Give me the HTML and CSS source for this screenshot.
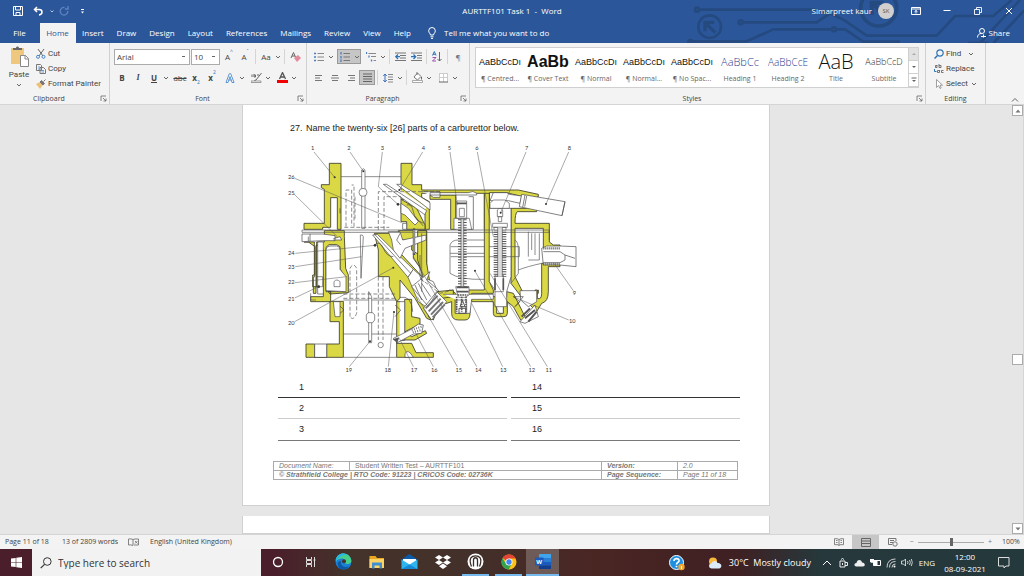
FILE: index.html
```html
<!DOCTYPE html>
<html lang="en">
<head>
  <meta charset="UTF-8">
  <meta name="viewport" content="width=device-width, initial-scale=1.0">
  <title>AURTTF101 Task 1 - Word</title>
  <link rel="stylesheet" href="styles.css">
</head>
<body>
  <!-- shared icons -->
  <svg class="defs" aria-hidden="true">
    <symbol id="chev" viewBox="0 0 8 8"><path d="M2 3l2 2 2-2" fill="none" stroke="#666" /></symbol>
    <symbol id="launcher" viewBox="0 0 7 7"><path d="M1 6V1h5M3 3l3 3M6 3.500V6H3.500" fill="none" stroke="#666" stroke-width=".8"/></symbol>
  </svg>

  <!-- Title bar and tabs -->
  <header class="header">
    <svg class="circuit" viewBox="0 0 1272 129" aria-hidden="true">
      <g fill="none" stroke="#254a80" stroke-width="8">
        <circle cx="291" cy="29" r="6"/><path d="M300 29H640L690 40 735 62 800 107H1010L1065 48H1180L1235 0"/>
        <circle cx="422" cy="67" r="6"/><path d="M431 67H650L690 40"/>
        <circle cx="702" cy="88" r="6"/><path d="M271 124H440L520 88H693M711 88H735L790 125H900"/>
        <circle cx="271" cy="126" r="6"/>
        <circle cx="329" cy="80" r="34"/><path d="M346 98L317 69M315 94V67H343" stroke-width="10"/>
        <circle cx="836" cy="24" r="54" stroke-width="11"/><path d="M862 55L818 10M815 45V8H850" stroke-width="12"/>
        <path d="M1140 129L1260 0M1180 129L1272 32"/><path d="M1105 129h60"/>
      </g>
    </svg>
    <div class="title-row">
      <div class="quick">
        <button aria-label="Save"><svg width="10" height="10" viewBox="0 0 10 10"><path d="M.5.500h9v9h-9zM2.500.500v3.500h5V.500M3 9.500V6.500h4v3" fill="none" stroke="#fff"/></svg></button>
        <button aria-label="Undo"><svg width="10" height="10" viewBox="0 0 10 10"><path d="M4 1L1.500 3.500 4 6M1.500 3.500H6c4 0 4 5 0 5.500" fill="none" stroke="#fff" stroke-width="1.500"/></svg></button>
        <button class="narrow" aria-label="Undo list"><svg width="8" height="8" viewBox="0 0 8 8"><path d="M2.500 3.500L4 5l1.500-1.500" fill="none" stroke="#b9c9e4"/></svg></button>
        <button class="redo" aria-label="Redo"><svg width="10" height="10" viewBox="0 0 10 10"><path d="M5.500 1.500A3.800 3.800 0 1 0 8.800 5M9 0v3H6" fill="none" stroke="#5f83bf" stroke-width="1.300"/></svg></button>
        <button aria-label="Customise toolbar"><svg width="8" height="8" viewBox="0 0 8 8"><path d="M3 2.500h3" stroke="#fff"/><path d="M3 4.500h3l-1.500 2z" fill="#fff"/></svg></button>
      </div>
      <h1>AURTTF101 Task 1 &nbsp;-&nbsp; Word</h1>
      <div class="account">
        <span>Simarpreet kaur</span>
        <button class="avatar">SK</button>
        <div class="window-btns">
          <button aria-label="Ribbon options"><svg width="10" height="8" viewBox="0 0 10 8"><path d="M.5.500h9v7h-9zM.5 2h9M5 6.500V3.500M3.500 4.800L5 3.500l1.500 1.300" fill="none" stroke="#fff"/></svg></button>
          <button aria-label="Minimise"><svg width="8" height="8" viewBox="0 0 8 8"><path d="M.5 3.500h7" stroke="#fff"/></svg></button>
          <button aria-label="Restore"><svg width="8" height="8" viewBox="0 0 8 8"><path d="M.5 2.500h5v5h-5zM2.500 2.500v-2h5v5h-2" fill="none" stroke="#fff" stroke-width=".9"/></svg></button>
          <button aria-label="Close"><svg width="8" height="8" viewBox="0 0 8 8"><path d="M1 1l6 6M7 1L1 7" stroke="#fff"/></svg></button>
        </div>
      </div>
    </div>
    <nav class="tabs">
      <button class="tab file">File</button>
      <button class="tab active">Home</button>
      <button class="tab">Insert</button>
      <button class="tab">Draw</button>
      <button class="tab">Design</button>
      <button class="tab">Layout</button>
      <button class="tab">References</button>
      <button class="tab">Mailings</button>
      <button class="tab">Review</button>
      <button class="tab">View</button>
      <button class="tab">Help</button>
      <label class="tell-me">
        <svg width="8" height="12" viewBox="0 0 8 12"><path d="M2.500 8C2.500 6.500.700 6 .700 3.800a3.300 3.300 0 0 1 6.600 0C7.300 6 5.500 6.500 5.500 8zM2.500 9.800h3M3 11.400h2" fill="none" stroke="#fff"/></svg>
        <input type="text" placeholder="Tell me what you want to do" aria-label="Tell me what you want to do">
      </label>
      <button class="share"><svg width="9" height="10" viewBox="0 0 9 10"><circle cx="5" cy="3" r="2.500" fill="none" stroke="#fff"/><path d="M.5 9.500C.5 7 2 5.500 4.500 5.500M4 8.500h5M6.500 6.500v3" fill="none" stroke="#fff"/></svg>Share</button>
    </nav>
  </header>

  <!-- Ribbon -->
  <section class="ribbon">
    <div class="group clipboard">
      <div class="group-body">
        <button class="paste">
          <svg width="19" height="21" viewBox="0 0 19 21"><path d="M1 2h13v16H1z" fill="#edc87e"/><path d="M3 4V2h3c0-2 3-2 3 0h3v2z" fill="#666"/><path d="M10.500 9.500h5l3 3v8h-8z" fill="#fff" stroke="#888"/><path d="M15 9.500v3.500h3.500" fill="none" stroke="#888"/></svg>
          <span>Paste</span>
          <svg width="8" height="8"><use href="#chev"/></svg>
        </button>
        <div class="stack">
          <button><svg width="10" height="10" viewBox="0 0 10 10"><path d="M2 0l5 7M8 0L3 7" stroke="#666" fill="none"/><circle cx="2" cy="7.800" r="1.500" fill="none" stroke="#4a86c5"/><circle cx="7.500" cy="7.800" r="1.500" fill="none" stroke="#4a86c5"/></svg>Cut</button>
          <button><svg width="10" height="10" viewBox="0 0 10 10"><path d="M.5.500h4l1 1v5h-5zM4 3.500h3.500l2 2v4H4z" fill="#f3f3f3" stroke="#777"/><path d="M2 3h2M2 5h2M5.500 6.500H8M5.500 8H8" stroke="#4a86c5" stroke-width=".8"/></svg>Copy</button>
          <button><svg width="10" height="10" viewBox="0 0 10 10"><path d="M0 5l4-2 3 3-3 4z" fill="#edc07a"/><path d="M4 3l1.500-1.500 3 3L7 6zM7.500 2.500L9.500.500" fill="#777" stroke="#777"/></svg>Format Painter</button>
        </div>
      </div>
      <div class="group-label"><span>Clipboard</span><button aria-label="Clipboard options"><svg width="7" height="7"><use href="#launcher"/></svg></button></div>
    </div>

    <div class="group font">
      <div class="group-body rows">
        <div class="tools">
          <select class="font-name" aria-label="Font"><option>Arial</option></select>
          <select class="font-size" aria-label="Font size"><option>10</option></select>
          <button aria-label="Grow font">A<sup class="blue">^</sup></button>
          <button aria-label="Shrink font">A<sup class="blue">ˇ</sup></button>
          <i class="sep"></i>
          <button aria-label="Change case">Aa</button>
          <button class="chev" aria-label="Change case list"><svg width="8" height="8"><use href="#chev"/></svg></button>
          <i class="sep"></i>
          <button aria-label="Clear formatting"><svg width="11" height="10" viewBox="0 0 11 10"><path d="M1 6l2.500-5.500L5.500 5M2 4h3" fill="none" stroke="#666"/><path d="M4 6l4-3 3 3-4 4z" fill="#e58a9b"/></svg></button>
        </div>
        <div class="tools">
          <button aria-label="Bold"><b>B</b></button>
          <button aria-label="Italic"><b class="ital">I</b></button>
          <button aria-label="Underline"><b class="under">U</b></button>
          <button class="chev" aria-label="Underline list"><svg width="8" height="8"><use href="#chev"/></svg></button>
          <button class="gap" aria-label="Strikethrough"><s>abc</s></button>
          <button aria-label="Subscript"><b>x</b><sub class="blue">2</sub></button>
          <button aria-label="Superscript"><b>x</b><sup class="blue">2</sup></button>
          <button class="gap" aria-label="Text effects"><svg width="10" height="10" viewBox="0 0 10 10"><path d="M1 9.500L4.300.700h1.400L9 9.500H7L5 3.500 3 9.500zM3.500 7h3" fill="#fff" stroke="#5b93d0"/></svg></button>
          <button class="chev" aria-label="Text effects list"><svg width="8" height="8"><use href="#chev"/></svg></button>
          <button class="gap" aria-label="Highlight"><svg width="11" height="10" viewBox="0 0 11 10"><path d="M0 8h10v1.500H0z" fill="#fff" stroke="#777" stroke-width=".7"/><path d="M10.500 0L5 7 3.500 7.500M1 1.500v2.500M3 1v3h1.500V2H3M6 2h2" fill="none" stroke="#666"/></svg></button>
          <button class="chev" aria-label="Highlight list"><svg width="8" height="8"><use href="#chev"/></svg></button>
          <button class="gap" aria-label="Font colour"><svg width="11" height="11" viewBox="0 0 11 11"><path d="M2.500 7l3-6.500L8.500 7M3.500 5h4" fill="none" stroke="#555" stroke-width="1.300"/><path d="M0 8h11v3H0z" fill="#f00000"/></svg></button>
          <button class="chev" aria-label="Font colour list"><svg width="8" height="8"><use href="#chev"/></svg></button>
        </div>
      </div>
      <div class="group-label"><span>Font</span><button aria-label="Font options"><svg width="7" height="7"><use href="#launcher"/></svg></button></div>
    </div>

    <div class="group paragraph">
      <div class="group-body rows">
        <div class="tools">
          <button aria-label="Bullets"><svg width="10" height="10" viewBox="0 0 10 10"><path d="M0 1.500h2M0 5h2M0 8.500h2" stroke="#4a7fc0" stroke-width="1.500"/><path d="M3.500 1.500H10M3.500 5H10M3.500 8.500H10" stroke="#888"/></svg></button>
          <button class="chev" aria-label="Bullets list"><svg width="8" height="8"><use href="#chev"/></svg></button>
          <span class="pressed gap">
            <button aria-label="Numbering"><svg width="10" height="10" viewBox="0 0 10 10"><path d="M1 0v2.500M1 4v2.500M1 7.500V10" stroke="#4a7fc0" stroke-width="1.300"/><path d="M3.500 1.500H10M3.500 5H10M3.500 8.500H10" stroke="#777"/></svg></button>
            <button class="chev" aria-label="Numbering list"><svg width="8" height="8"><use href="#chev"/></svg></button>
          </span>
          <button class="gap" aria-label="Multilevel list"><svg width="10" height="10" viewBox="0 0 10 10"><path d="M.5 0v2M3 3.500v2M5.500 7.500v2" stroke="#4a7fc0" stroke-width="1.300"/><path d="M2.500 1.500H10M5 4.500h5M7.500 8.500H10" stroke="#888"/></svg></button>
          <button class="chev" aria-label="Multilevel options"><svg width="8" height="8"><use href="#chev"/></svg></button>
          <i class="sep"></i>
          <button aria-label="Decrease indent"><svg width="11" height="10" viewBox="0 0 11 10"><path d="M0 1h11M5 3.500h6M5 6h6M0 8.500h11" stroke="#777"/><path d="M5 4.700H1M3 2.500L.800 4.700 3 7" fill="none" stroke="#2f75b5" stroke-width="1.300"/></svg></button>
          <button aria-label="Increase indent"><svg width="11" height="10" viewBox="0 0 11 10"><path d="M0 1h11M6 3.500h5M6 6h5M0 8.500h11" stroke="#777"/><path d="M0 4.700h4M2.500 2.500l2.200 2.200L2.500 7" fill="none" stroke="#2f75b5" stroke-width="1.300"/></svg></button>
          <i class="sep"></i>
          <button aria-label="Sort"><svg width="10" height="11" viewBox="0 0 10 11"><path d="M.5 4.500L2.300.500l1.800 4M1 3.300h2.500" fill="none" stroke="#2f75b5"/><path d="M.5 6.500H4L.500 10H4" fill="none" stroke="#9b4fae"/><path d="M7.500 1v9M5.500 8l2 2 2-2" fill="none" stroke="#666"/></svg></button>
          <i class="sep"></i>
          <button class="mark" aria-label="Show marks">¶</button>
        </div>
        <div class="tools">
          <button aria-label="Align left"><svg width="8" height="8" viewBox="0 0 8 8"><path d="M0 1.500h7M0 4h5M0 6.500h7" stroke="#777"/></svg></button>
          <button aria-label="Centre"><svg width="8" height="8" viewBox="0 0 8 8"><path d="M1 1.500h6M0 4h8M1 6.500h6" stroke="#777"/></svg></button>
          <button aria-label="Align right"><svg width="8" height="8" viewBox="0 0 8 8"><path d="M1 1.500h7M3 4h5M1 6.500h7" stroke="#777"/></svg></button>
          <button class="pressed" aria-label="Justify"><svg width="9" height="9" viewBox="0 0 9 9"><path d="M0 1h9M0 3.500h9M0 6h9M0 8.500h9" stroke="#666"/></svg></button>
          <i class="sep"></i>
          <button aria-label="Line spacing"><svg width="10" height="10" viewBox="0 0 10 10"><path d="M2 1v8M.3 3L2 1l1.700 2M.3 7L2 9l1.700-2" fill="none" stroke="#3d6fc0"/><path d="M5 1.500h5M5 4h5M5 6.500h5M5 9h5" stroke="#888"/></svg></button>
          <button class="chev" aria-label="Line spacing list"><svg width="8" height="8"><use href="#chev"/></svg></button>
          <i class="sep"></i>
          <button aria-label="Shading"><svg width="11" height="11" viewBox="0 0 11 11"><path d="M2 5l3.500-4L9 4.500 5.500 8zM5 0v3" fill="#fff" stroke="#777"/><path d="M9.500 5v2.500" stroke="#2f75b5"/><path d="M.5 8.500h10v2H.500z" fill="#fff" stroke="#888" stroke-width=".7"/></svg></button>
          <button class="chev" aria-label="Shading list"><svg width="8" height="8"><use href="#chev"/></svg></button>
          <button class="gap" aria-label="Borders"><svg width="9" height="10" viewBox="0 0 9 10"><path d="M0 0h9v9H0z" fill="#fff"/><path d="M.5 0v9M8.500 0v9M4.500 0v9M0 .5h9M0 4.500h9" stroke="#ccc"/><path d="M0 9h9" stroke="#666"/></svg></button>
          <button class="chev" aria-label="Borders list"><svg width="8" height="8"><use href="#chev"/></svg></button>
        </div>
      </div>
      <div class="group-label"><span>Paragraph</span><button aria-label="Paragraph options"><svg width="7" height="7"><use href="#launcher"/></svg></button></div>
    </div>

    <div class="group styles">
      <div class="group-body">
        <div class="gallery">
          <button class="style"><span class="sample">AaBbCcDı</span><span>¶ Centred...</span></button>
          <button class="style"><span class="sample cover">AaBb</span><span>¶ Cover Text</span></button>
          <button class="style"><span class="sample">AaBbCcDı</span><span>¶ Normal</span></button>
          <button class="style"><span class="sample">AaBbCcDı</span><span>¶ Normal...</span></button>
          <button class="style"><span class="sample">AaBbCcDı</span><span>¶ No Spac...</span></button>
          <button class="style"><span class="sample h-one">AaBbCc</span><span>Heading 1</span></button>
          <button class="style"><span class="sample h-two">AaBbCcE</span><span>Heading 2</span></button>
          <button class="style"><span class="sample big">AaB</span><span>Title</span></button>
          <button class="style"><span class="sample subtitle">AaBbCcD</span><span>Subtitle</span></button>
          <div class="gallery-scroll">
            <button class="off" aria-label="Up"><svg width="6" height="6" viewBox="0 0 6 6"><path d="M1 4h4L3 2z" fill="#aaa"/></svg></button>
            <button aria-label="Down"><svg width="6" height="6" viewBox="0 0 6 6"><path d="M1 2h4L3 4z" fill="#666"/></svg></button>
            <button aria-label="More"><svg width="6" height="6" viewBox="0 0 6 6"><path d="M.5 1h5" stroke="#666"/><path d="M1 3h4L3 5z" fill="#666"/></svg></button>
          </div>
        </div>
      </div>
      <div class="group-label"><span>Styles</span><button aria-label="Styles options"><svg width="7" height="7"><use href="#launcher"/></svg></button></div>
    </div>

    <div class="group editing">
      <div class="group-body">
        <div class="stack">
          <button><svg width="10" height="10" viewBox="0 0 10 10"><circle cx="6" cy="4" r="3.200" fill="none" stroke="#2f75b5" stroke-width="1.200"/><path d="M3.500 6.500L.500 9.500" stroke="#2f75b5" stroke-width="1.500"/></svg>Find<svg class="more" width="8" height="8"><use href="#chev"/></svg></button>
          <button><svg width="10" height="10" viewBox="0 0 10 10"><path d="M3 1.500H1.500v2H3V1M5 0v3.500h2v-2H5M5.500 6v2.500M5.500 6.500h-2v2h2M9.500 6.500h-2v2h2" fill="none" stroke="#666" stroke-width=".9"/><path d="M.5 5v2.500h2" fill="none" stroke="#2f75b5"/></svg>Replace</button>
          <button><svg width="10" height="10" viewBox="0 0 10 10"><path d="M2.500.500v8l2-2 1.500 3 1.200-.6L6 6.200h2.500z" fill="#fff" stroke="#888" stroke-width=".8"/></svg>Select<svg width="8" height="8"><use href="#chev"/></svg></button>
        </div>
      </div>
      <div class="group-label"><span>Editing</span></div>
    </div>
    <button class="collapse" aria-label="Collapse ribbon"><svg width="8" height="8" viewBox="0 0 8 8"><path d="M1 5.500l3-3 3 3" fill="none" stroke="#666"/></svg></button>
  </section>

  <!-- Document -->
  <main class="workspace">
    <div class="pages">
      <article class="page">
        <p class="question"><span>27.</span>Name the twenty-six [26] parts of a carburettor below.</p>
        <svg class="figure" viewBox="0 0 930 708" role="img" aria-label="Carburettor section">
          <!-- cast body -->
          <g fill="#dad844" stroke="#3a3a2a" stroke-width="2.500">
            <path d="M148 70H183V268H172V173H152V262H128V268H72V250H133V148L124 143V134H148Z"/>
            <path d="M363 70H396V134H425V150H715L775 163V170L770 172 728 170 680 158H628V268H613V160H425V172L448 185V268H435V215L396 188V178H363Z"/>
            <path d="M363 178L410 205 435 255V268H380V245H363Z"/>
            <path d="M450 165H527V268H512V178H450Z"/>
            <path d="M72 306H103V405H98V440H110V306H133V272H193V290L197 385 205 405V458L150 462 145 455H193V410L180 385V320L170 314H147L138 322V455H152V485H92V470H130V330L123 316H108V460H100V415L105 405V320L85 306Z"/>
            <path d="M150 484H190V652H78V612H104V652H140V612H178V545H150Z"/>
            <path d="M283 280H352V330L440 425 480 458H520V480L490 470 452 540 440 535 405 475 360 420V475L350 485 328 440V410H295V330Z"/>
            <path d="M355 272H400V355L440 410V272H418V345L395 330V300H355Z"/>
            <path d="M413 272H440V370L450 430 432 420 413 360Z"/>
            <path d="M350 485H360V600H405L440 580 436 572 395 590 375 575 420 552V535L395 530V478H374V600H350V652H460V638H408L395 610H350Z"/>
            <path d="M613 160H628V425L640 450V460H575V485H640V520Q640 530 650 530H672Q682 530 682 520V485L700 500 722 540 740 545 735 530 700 460 680 455V470L670 475V520H650V470H570V520Q570 540 555 540H535Q515 540 515 520V485L470 500 485 460 510 450 525 458 530 475V520H560V450H613Z"/>
            <path d="M693 205H770V215H712Q705 220 705 250H808V306L820 315H840V325H790V265H705V410L735 470 775 450V460L735 485 693 430Z"/>
            <path d="M785 370H840V380H805V455Q805 485 785 490L770 515 750 495 765 480V450H772V475Q785 480 785 460Z"/>
            <path d="M452 470L470 455 520 450 520 470 485 475 460 540 445 530Z"/>
          </g>
          <!-- passages cut in the body -->
          <g fill="#fff" stroke="#444" stroke-width="2">
            <path d="M335 150L362 150 440 202 430 218Z" stroke="none"/>
            <path d="M310 133H320L440 212 434 224Z"/>
            <path d="M350 133H362L450 188V210Z"/>
            <path d="M66 282H128L165 287V302H128L66 305ZM90 282V304M160 296L180 290 185 300H160"/>
            <path d="M138 330Q138 318 150 318H170Q180 318 180 330V388L198 410V455L138 452Z"/>
            <path d="M113 306H130V462H113ZM104 612H140V652H104ZM160 485H180V530H165Z"/>
            <path d="M278 285L292 283 400 388 384 412Z"/>
            <path d="M384 412L400 388 425 410 460 425 480 470 445 505 415 485Z"/>
            <path d="M285 284L392 400"/>
            <path d="M363 190L385 205 415 245 405 255 375 225 363 220ZM368 250H380V268H368Z"/>
            <path d="M325 275H360L368 300 438 285V300L375 325 360 355 340 330 335 300Z"/>
            <path d="M450 158H565Q580 150 590 160V165H450ZM425 155H480V172H460L450 165"/>
            <path d="M640 158H680L688 163 725 168 720 190 685 182H630Z"/>
            <path d="M725 163L855 185 846 227 718 200ZM735 165L728 202M740 168L734 200M855 185L846 227"/>
            <path d="M628 205H693V410L680 455V500H645V450L628 425Z"/>
            <path d="M566 170H580V268H566M490 463H640V478H575L570 520H525V478"/>
            <path d="M395 440L450 395 440 420 475 450 445 500ZM430 505L470 455 500 485 455 540Z"/>
            <path d="M358 485H374V600H358M375 640Q385 625 400 652H375Z"/>
            <path d="M720 452H770V485L745 500 722 480ZM720 545L765 495 775 530 735 550Z"/>
            <path d="M785 325L800 318H840L888 320V380L840 375H790ZM790 335H840L855 345V360L840 368H790M855 345L885 355"/>
          </g>
          <!-- floats, bowls and covers -->
          <g fill="none" stroke="#555" stroke-width="2">
            <path d="M183 110H363M66 270H808V277H66V270M190 480H350M190 582H350M190 652H350"/>
            <path d="M510 315Q515 300 535 300H613M510 315V340H613M510 340V400Q540 420 613 418M705 300Q715 305 715 330V400L693 430"/>
            <path d="M425 280V455M512 320H613M512 350H613M628 320H718V350H628M715 390Q740 380 785 370M745 275V350M755 280V330M765 280V345M778 280V360H745M808 272V300"/>
            <path d="M92 460V480H108M98 440H128V410H108M162 440V425Q170 415 180 425V440ZM85 290V305"/>
          </g>
          <g fill="#fff" stroke="#555" stroke-width="2">
            <path d="M245 90Q250 82 255 90V265H245ZM241 285H247L250 290 243 415ZM266 455L275 470V608H266Z"/>
            <circle cx="249" cy="157" r="12"/><path d="M264 518H278L284 525V540L278 548H264L259 540V525Z"/>
            <path d="M530 183H560V235H530ZM538 205H553V230H538ZM522 235H568L575 268H522Z"/>
            <path d="M630 190L640 180H675L688 190V205H630ZM652 210Q660 200 668 210V230H652ZM655 230H665V245H655ZM638 250H682V262H638ZM642 262H678V270H642Z"/>
            <path d="M645 405H670V455H645ZM527 440H567V465L555 472H535ZM527 480H560V520H527Z"/>
          </g>
          <!-- springs and threads -->
          <g fill="none" stroke="#555">
            <path d="M547 238V440" stroke-width="26" stroke-dasharray="3 5"/>
            <path d="M660 275V410" stroke-width="38" stroke-dasharray="3 4"/>
            <path d="M547 238V440" stroke-width="7" stroke="#ddd"/>
            <path d="M660 262V410" stroke-width="13" stroke="#ddd"/>
            <path d="M653 262V410M667 262V410M543 238V440M551 238V440" stroke-width="2"/>
            <path d="M437 505L473 467M446 514L482 476M453 524L489 486M458 532L494 494" stroke-width="6" stroke="#777"/>
            <path d="M725 530L750 505M735 535L765 510M745 545L770 515" stroke-width="6"/>
            <path d="M790 325H840M790 372H840" stroke-width="7" stroke-dasharray="3 3"/>
            <path d="M530 470V515M545 470V515M558 470V515M533 465H563" stroke-width="5" stroke-dasharray="5 2"/>
            <path d="M530 442H566M530 455H566M645 415V450M670 415V450M530 190H560" stroke-width="5"/>
            <path d="M540 500L547 480 555 500ZM537 505H557V520H537Z" stroke-width="3"/>
            <path d="M402 265V345" stroke-width="7"/><path d="M402 270V340" stroke="#fff" stroke-width="2"/>
          </g>
          <path d="M340 595L390 570 415 552 430 555 425 580 400 582 352 608Z" fill="#fff" stroke="#444" stroke-width="2"/>
          <path d="M395 570L425 560M398 577L425 570" stroke="#777" stroke-width="6" stroke-dasharray="3 4"/>
          <path d="M338 598L358 592 352 608Z" fill="#555"/>
          <g fill="none" stroke="#444" stroke-width="2">
            <path d="M420 345V410L430 425M283 315Q300 300 310 325T340 350M380 195Q395 190 400 215T430 250M405 230L430 258M360 280L350 300 362 315M415 430L440 480M405 435L425 480M425 430L452 470M345 495L362 510 345 530M360 472Q395 465 398 515M700 470L720 485 705 500 730 470ZM180 205V220M180 498L192 510 180 520"/>
          </g>
          <!-- hidden edges -->
          <g fill="none" stroke="#555" stroke-width="2" stroke-dasharray="12 6">
            <path d="M198 260V150H215V258M222 260V135H215M225 170V240M295 270V155H480M312 270V170H363M193 262H328M210 530V385Q220 365 230 385V520Q220 545 210 530M295 410V600M309 410V600M190 462H345M190 475H345M420 415L480 460 520 450"/>
          </g>
          <circle cx="302" cy="615" r="8" fill="#fff" stroke="#555" stroke-width="2"/>
          <!-- leaders -->
          <g fill="none" stroke="#555" stroke-width="1.500">
            <path d="M102 36L164 112M210 36L250 94M307 36L295 140 354 193M428 36L358 150M510 36L532 195M592 36L640 290M738 36L662 218M866 36L798 192M44 115L365 248M42 162L172 290M46 340L285 316M46 380L245 350M44 428L200 410M44 474L116 440M44 545L340 383M208 680L270 604M325 680L342 516M400 680L358 595M460 680L410 585M532 680L412 470M590 680L400 350M668 680L575 490M752 680L584 392M802 680L630 400M880 452L822 370M866 540L700 470"/>
          </g>
          <g fill="#333"><circle cx="164" cy="112" r="3"/><circle cx="250" cy="94" r="3"/><circle cx="354" cy="193" r="4"/><circle cx="358" cy="150" r="3"/><circle cx="662" cy="218" r="3"/><circle cx="798" cy="192" r="3"/><circle cx="340" cy="383" r="3"/><circle cx="270" cy="604" r="3"/><circle cx="342" cy="516" r="3"/><circle cx="585" cy="392" r="3"/><circle cx="285" cy="316" r="4"/><circle cx="116" cy="440" r="4"/></g>
          <g class="callouts">
            <text x="98" y="31">1</text><text x="207" y="31">2</text><text x="307" y="31">3</text><text x="430" y="31">4</text>
            <text x="508" y="31">5</text><text x="591" y="31">6</text><text x="740" y="31">7</text><text x="868" y="31">8</text>
            <text x="34" y="118">26</text><text x="34" y="165">25</text><text x="34" y="346">24</text><text x="34" y="387">23</text>
            <text x="34" y="433">22</text><text x="34" y="484">21</text><text x="34" y="554">20</text>
            <text x="206" y="696">19</text><text x="323" y="696">18</text><text x="402" y="696">17</text><text x="463" y="696">16</text>
            <text x="536" y="696">15</text><text x="595" y="696">14</text><text x="670" y="696">13</text><text x="755" y="696">12</text><text x="806" y="696">11</text>
            <text x="883" y="466">9</text><text x="877" y="549">10</text>
          </g>
        </svg>
        <div class="answers">
          <div class="line">1</div><div class="line">14</div>
          <div class="line light">2</div><div class="line light">15</div>
          <div class="line mid">3</div><div class="line mid">16</div>
        </div>
        <table class="doc-footer">
          <colgroup><col class="c-name"><col class="c-title"><col class="c-key"><col class="c-val"></colgroup>
          <tr><td>Document Name:</td><td class="upright">Student Written Test – AURTTF101</td><th>Version:</th><td>2.0</td></tr>
          <tr><th colspan="2">© Strathfield College | RTO Code: 91223 | CRICOS Code: 02736K</th><th>Page Sequence:</th><td>Page 11 of 18</td></tr>
        </table>
      </article>
      <article class="page next"></article>
    </div>
    <div class="scrollbar">
      <button aria-label="Scroll up"><svg width="6" height="6" viewBox="0 0 6 6"><path d="M.5 4.500h5L3 1.500z" fill="#777"/></svg></button>
      <div class="thumb"></div>
      <button aria-label="Scroll down"><svg width="6" height="6" viewBox="0 0 6 6"><path d="M.5 1.500h5L3 4.500z" fill="#777"/></svg></button>
    </div>
  </main>

  <!-- Status bar -->
  <footer class="status">
    <span class="st-page">Page 11 of 18</span>
    <span class="st-words">13 of 2809 words</span>
    <svg class="st-proof" width="11" height="8" viewBox="0 0 11 8"><path d="M5 1.500Q3 .5.500 1v6Q3 6.500 5 7.500zM5 1.500L7 1h3.500v6H6M7 3l2.500 2.500M9.500 3L7 5.500" fill="none" stroke="#777" stroke-width=".9"/></svg>
    <span>English (United Kingdom)</span>
    <div class="views">
      <button aria-label="Read mode"><svg width="10" height="8" viewBox="0 0 10 8"><path d="M5 1.500L3 .700H.500v6H4L5 7.500 6 6.700h3.500v-6H7zM5 1.500v6M2 2.500h1.500M2 4.500h1.500M6.500 2.500H8M6.500 4.500H8" fill="none" stroke="#777" stroke-width=".9"/></svg></button>
      <button class="on" aria-label="Print layout"><svg width="10" height="9" viewBox="0 0 10 9"><path d="M.5.500h9v8h-9zM1 3h8M1 5.500h8" fill="none" stroke="#666"/></svg></button>
      <button aria-label="Web layout"><svg width="10" height="9" viewBox="0 0 10 9"><path d="M8 3V.500H.500v6H4M2 2.500h4M2 4.500h3" fill="none" stroke="#777"/><circle cx="7" cy="6" r="2.200" fill="none" stroke="#777"/></svg></button>
    </div>
    <button class="zoom-step" aria-label="Zoom out">−</button>
    <input class="zoom" type="range" min="0" max="100" value="50" aria-label="Zoom">
    <button class="zoom-step" aria-label="Zoom in">+</button>
    <span class="zoom-val">100%</span>
  </footer>

  <!-- Taskbar -->
  <footer class="taskbar">
    <button class="start" aria-label="Start"><svg width="11" height="11" viewBox="0 0 11 11"><path d="M0 1.500L4.700.900V5.200H0zM5.300.800L11 0v5.200H5.300zM0 5.800h4.700v4.300L0 9.500zM5.300 5.800H11V11l-5.700-.8z" fill="#fff"/></svg></button>
    <label class="search">
      <svg width="12" height="12" viewBox="0 0 12 12"><circle cx="7.300" cy="4.500" r="3.800" fill="none" stroke="#333"/><path d="M4.500 7.300L.700 11.200" stroke="#333" stroke-width="1.200"/></svg>
      <input type="text" placeholder="Type here to search" aria-label="Search">
    </label>
    <div class="apps">
      <button aria-label="Cortana"><svg width="12" height="12" viewBox="0 0 12 12"><circle cx="6" cy="6" r="4.500" fill="none" stroke="#fff" stroke-width="1.300"/></svg></button>
      <button aria-label="Task view"><svg width="12" height="12" viewBox="0 0 12 12"><path d="M1.500 1v2.500h5V1M1.500 11V8.500h5V11M1.500 4.500h5v3h-5zM9.500 1v10M8.500 4h2" fill="none" stroke="#ddd"/></svg></button>
      <button aria-label="Edge"><svg width="17" height="17" viewBox="0 0 17 17"><circle cx="8.500" cy="8.500" r="8" fill="#1b7fd6"/><path d="M.7 7C2-1 14-2 16.300 7c.7 4-5 5-6.300 3 1.500-3-1-5-4-4.500C3 6 1.500 8 .700 7z" fill="#45cf8b"/><path d="M.7 7C2 0 9-1 12 2 7 2 4 3 1 9z" fill="#27b7e8"/><path d="M6 8c-1 5 3 7 8 5.500-4 5-10 3-11-.5C2 9 4 8 6 8z" fill="#0c59a4"/><circle cx="9" cy="8.300" r="2" fill="#44342c"/></svg></button>
      <button aria-label="File Explorer"><svg width="16" height="14" viewBox="0 0 16 14"><path d="M.5 1h6l1.500 2H15v10H.500z" fill="#e9a820"/><path d="M.5 4H15v9H.500z" fill="#fbd465"/><path d="M3 13.500V7.500h10v6h-2.500v-3h-5v3z" fill="#3f8fd0"/></svg></button>
      <button aria-label="Mail"><svg width="17" height="15" viewBox="0 0 17 15"><path d="M.5 5.500L8.500 0l8 5.500v3H.500z" fill="#0a5ca8"/><path d="M2 5h13v6H2z" fill="#fff"/><path d="M.5 5.500l8 5 8-5V15H.500z" fill="#2fb5ee"/><path d="M.5 15l8-4.500 8 4.500z" fill="#168ad6"/></svg></button>
      <button aria-label="Dropbox"><svg width="16" height="14" viewBox="0 0 16 14"><path d="M4 0l4 2.500L4 5 0 2.500zM12 0l4 2.500L12 5 8 2.500zM4 5l4 2.500L4 10 0 7.500zM12 5l4 2.500-4 2.500-4-2.500zM8 8.500l4 2.700L8 14l-4-2.800z" fill="#fff"/></svg></button>
      <button class="open" aria-label="Music"><svg width="17" height="17" viewBox="0 0 17 17"><circle cx="8.500" cy="8.500" r="8" fill="#fff"/><path d="M4.500 13.500C1 5 5 2.800 8.500 2.800S16 5 12.500 13.500M6.500 13.500V7c0-3 4-3 4 0v6.500" fill="none" stroke="#3b2c28" stroke-width="1.300"/></svg></button>
      <button class="open" aria-label="Chrome"><svg width="16" height="16" viewBox="0 0 16 16"><circle cx="8" cy="8" r="7.500" fill="#fbc116"/><path d="M8 8L1.500 4.200A7.500 7.500 0 0 1 14.600 4.500H8z" fill="#e54335"/><path d="M1.500 4.200A7.500 7.500 0 0 0 7.500 15.500L11 9.500 5 9.800z" fill="#31a350"/><circle cx="8" cy="8" r="3.500" fill="#fff"/><circle cx="8" cy="8" r="2.700" fill="#4384f3"/></svg></button>
      <button class="open current" aria-label="Word"><svg width="16" height="15" viewBox="0 0 16 15"><path d="M4 0h12v4H4z" fill="#41a5ee"/><path d="M4 4h12v4H4z" fill="#2b7cd3"/><path d="M4 8h12v3.500H4z" fill="#185abd"/><path d="M4 11.500h12V15H4z" fill="#103f91"/><path d="M0 3.500h8.500v8H0z" fill="#185abd"/><text x="4.200" y="9.800" class="word-w">W</text></svg></button>
    </div>
    <div class="tray">
      <button class="help" aria-label="Get help"><svg width="16" height="16" viewBox="0 0 16 16"><circle cx="7.500" cy="7.500" r="7" fill="#1d8fe0" stroke="#fff"/><path d="M5 6c0-3.500 5.500-3 5 0-.3 1.500-2.500 1.500-2.500 3.500M7.500 10.800v1.500" fill="none" stroke="#fff" stroke-width="1.700"/><circle cx="12.500" cy="12" r="3.200" fill="#f2a531"/><path d="M12.500 11v3" stroke="#fff"/></svg></button>
      <button class="weather"><svg width="14" height="12" viewBox="0 0 14 12"><circle cx="5" cy="4.500" r="4" fill="#f8b93c"/><path d="M3.500 11.500a2.500 2.500 0 0 1 0-5C5 3 9 3.500 9.500 6c4-.5 5.500 4.500 1.500 5.500z" fill="#dcebf8"/></svg><span>30°C&nbsp; Mostly cloudy</span></button>
      <div class="tray-icons">
        <button aria-label="Hidden icons"><svg width="10" height="8" viewBox="0 0 10 8"><path d="M1 6l4-4 4 4" fill="none" stroke="#fff"/></svg></button>
        <button aria-label="Meet now"><svg width="9" height="10" viewBox="0 0 9 10"><path d="M1 3h5v6H1zM6 4.500h2.500v3H6M2 1.500L3.500.500 5 1.500M3.500 5v2" fill="none" stroke="#fff" stroke-width=".9"/></svg></button>
        <button aria-label="OneDrive"><svg width="11" height="8" viewBox="0 0 11 8"><path d="M2.500 7.500C-.5 7.500 0 4 2.500 4 3 .5 7 0 8 3.500c3.500 0 3.500 4 1 4z" fill="#eee"/></svg></button>
        <button aria-label="Battery"><svg width="11" height="9" viewBox="0 0 11 9"><path d="M3.500 2.500h7v5h-7z" fill="none" stroke="#fff"/><path d="M3.500 2.500h4v5h-4zM0 1h4v3L2 5 0 4z" fill="#fff"/></svg></button>
        <button aria-label="Wi-Fi"><svg width="10" height="10" viewBox="0 0 10 10"><path d="M1 9.500Q1 1 9.500 1M3.500 9.500Q3.500 3.500 9.500 3.500M6 9.500Q6 6 9.500 6" fill="none" stroke="#ddd" stroke-width=".9"/><circle cx="8.500" cy="8.500" r="1" fill="#fff"/></svg></button>
        <button aria-label="Volume"><svg width="12" height="9" viewBox="0 0 12 9"><path d="M.5 3h2L4.500 1v7l-2-2h-2zM6.500 3q1 1.500 0 3M8.500 2q1.700 2.500 0 5M10.300 1q2 3.500 0 7" fill="none" stroke="#ddd" stroke-width=".9"/></svg></button>
        <button class="lang">ENG</button>
      </div>
      <button class="clock"><span>12:00</span><span>08-09-2021</span></button>
      <button class="notify" aria-label="Notifications"><svg width="12" height="12" viewBox="0 0 12 12"><path d="M.5.500h10.500v8.500H8L6 11V9H.500z" fill="none" stroke="#ddd"/></svg></button>
    </div>
  </footer>
</body>
</html>
```
FILE: styles.css
```css
* {
  box-sizing: border-box;
}
body {
  margin: 0;
  height: 100vh;
  display: flex;
  flex-direction: column;
  overflow: hidden;
  background: #e6e6e6;
  color: #444;
  font-family: "Open Sans", "Noto Sans", sans-serif;
  font-size: 8px;
  line-height: 12px;
}
button, input, select {
  font: inherit;
  color: inherit;
  margin: 0;
  padding: 0;
  border: none;
  background: none;
}
button {
  display: flex;
  align-items: center;
  justify-content: center;
  white-space: nowrap;
}
svg {
  flex-shrink: 0;
  display: block;
}
.defs {
  position: absolute;
  width: 0;
  height: 0;
}

/* header */
.header {
  position: relative;
  background: #2b579a;
  color: #fff;
  flex-shrink: 0;
}
.circuit {
  position: absolute;
  top: 0;
  right: 0;
  width: 424px;
  height: 43px;
}
.title-row {
  position: relative;
  display: grid;
  grid-template-columns: 1fr auto 1fr;
  align-items: center;
  height: 22px;
}
.title-row h1 {
  margin: 0;
  font-size: 8px;
  font-weight: 400;
}
.quick {
  display: flex;
  padding-left: 8px;
}
.quick button {
  width: 20px;
}
.quick .narrow {
  width: 8px;
}
.quick .redo {
  width: 16px;
}
.account {
  display: flex;
  align-items: center;
  justify-content: flex-end;
  gap: 6px;
}
.avatar {
  width: 16px;
  height: 16px;
  border-radius: 50%;
  background: #d2d0ce;
  color: #555;
  font-size: 6px;
}
.window-btns {
  display: flex;
}
.window-btns button {
  width: 31px;
}
.tabs {
  position: relative;
  display: flex;
  height: 21px;
  padding-top: 1px;
}
.tab {
  padding: 0 7px 0 6px;
}
.tab.file {
  width: 40px;
}
.tab.active {
  width: 36px;
  background: #f3f3f3;
  color: #2b579a;
}
.tell-me {
  display: flex;
  align-items: center;
  gap: 8px;
  flex: 1;
  padding-left: 10px;
}
.tell-me input {
  width: 130px;
}
.tell-me input::placeholder {
  color: #fff;
}
.share {
  gap: 3px;
  padding-right: 14px;
}

/* ribbon */
.ribbon {
  display: flex;
  height: 62px;
  flex-shrink: 0;
  background: #f3f3f3;
  border-bottom: 1px solid #d5d5d5;
}
.group {
  display: flex;
  flex-direction: column;
  padding-top: 3px;
  border-right: 1px solid #d0d0d0;
}
.group-body {
  flex: 1;
  display: flex;
}
.group-body.rows {
  flex-direction: column;
}
.group-label {
  display: flex;
  align-items: center;
  height: 11px;
  font-size: 7px;
}
.group-label span {
  flex: 1;
  text-align: center;
}
.group-label button {
  width: 11px;
}
.clipboard {
  width: 110px;
}
.font {
  width: 197px;
}
.paragraph {
  width: 163px;
}
.styles {
  flex: 1;
}
.editing {
  width: 60px;
}
.paste {
  flex-direction: column;
  justify-content: flex-start;
  width: 36px;
  padding-left: 2px;
}
.paste span {
  margin-top: 2px;
}
.stack {
  display: flex;
  flex-direction: column;
}
.stack button {
  height: 15px;
  gap: 2px;
  justify-content: flex-start;
}
.paste span, .stack button {
  font-family: Roboto, "Open Sans", sans-serif;
}
.editing .stack {
  padding-left: 8px;
}
.stack .more {
  margin-left: 4px;
}
.tools {
  display: flex;
  align-items: center;
  height: 21px;
  padding-left: 4px;
}
.tools button {
  width: 16px;
  height: 15px;
}
.tools .chev {
  width: 8px;
}
.tools .gap {
  margin-left: 2px;
}
.tools select {
  appearance: none;
  height: 16px;
  margin-right: 1px;
  padding: 0 2px;
  border: 1px solid #ababab;
  background: #fff linear-gradient(#666, #666) no-repeat right 4px center / 3px 1px;
}
.tools .font-name {
  width: 76px;
}
.tools .font-size {
  width: 29px;
}
.tools .sep {
  width: 1px;
  height: 15px;
  margin: 0 2px;
  background: #d5d5d5;
}
.tools .pressed {
  display: flex;
  background: #c6c6c6;
  outline: 1px solid #9a9a9a;
  outline-offset: -1px;
}
.tools .mark {
  color: #777;
}
.tools sup, .tools sub {
  font-size: 5px;
  line-height: 5px;
}
.tools sup {
  align-self: flex-start;
}
.tools sub {
  align-self: flex-end;
}
.blue {
  color: #2f75b5;
}
.ital {
  font-family: "Liberation Serif", serif;
  font-style: italic;
}
.under {
  text-decoration: underline;
}
.gallery {
  display: flex;
  flex: 1;
  height: 41px;
  margin: 1px 6px 0 5px;
  border: 1px solid #d0d0d0;
  background: #fff;
}
.style {
  flex: 1;
  min-width: 0;
  flex-direction: column;
  font-size: 7px;
  color: #666;
}
.sample {
  display: flex;
  align-items: center;
  height: 23px;
  font: 9px "Liberation Sans", sans-serif;
  color: #111;
}
.sample.cover {
  font-size: 16px;
  font-weight: 700;
}
.sample.h-one, .sample.h-two, .sample.big, .sample.subtitle {
  font-family: "Open Sans", sans-serif;
  font-weight: 300;
}
.sample.h-one {
  font-size: 11px;
  color: #1f4490;
}
.sample.h-two {
  font-size: 10px;
  color: #1f4490;
}
.sample.big {
  font-size: 20px;
}
.sample.subtitle {
  color: #333;
}
.gallery-scroll {
  width: 10px;
  display: flex;
  flex-direction: column;
}
.gallery-scroll button {
  flex: 1;
  border-left: 1px solid #d0d0d0;
  border-bottom: 1px solid #d0d0d0;
}
.gallery-scroll .off {
  background: #e1e1e1;
}
.collapse {
  width: 38px;
  align-self: flex-end;
  justify-content: flex-end;
  padding: 0 5px 0 0;
}

/* document */
.workspace {
  flex: 1;
  min-height: 0;
  display: flex;
}
.pages {
  flex: 1;
  display: flex;
  flex-direction: column;
  align-items: center;
  gap: 10px;
  overflow: hidden;
}
.page {
  width: 528px;
  flex-shrink: 0;
  background: #fff;
  border: 1px solid #d0d0d0;
  border-top: none;
  color: #222;
  font-family: "Liberation Sans", sans-serif;
  padding: 17px 30px 25px;
}
.page.next {
  flex: 1;
  padding: 0;
}
.question {
  display: flex;
  margin: 0;
  padding-left: 17px;
  font-size: 9px;
}
.question span {
  width: 16px;
}
.figure {
  display: block;
  width: 310px;
  height: 236px;
  margin: 6px 0 1px 7px;
}
.callouts {
  font: 17px Lato, sans-serif;
  fill: #333;
  text-anchor: middle;
}
.answers {
  display: grid;
  grid-template-columns: 229px 229px;
  column-gap: 4px;
  margin-left: 5px;
}
.line {
  height: 21px;
  padding: 4px 0 0 21px;
  border-bottom: 1px solid #333;
  font-size: 9px;
}
.line.light {
  border-color: #ccc;
}
.line.mid {
  height: 22px;
  border-color: #777;
}
.doc-footer {
  width: 465px;
  margin-top: 20px;
  table-layout: fixed;
  border-collapse: collapse;
  font-size: 7px;
  line-height: 8px;
  font-style: italic;
  color: #777;
}
.doc-footer td, .doc-footer th {
  height: 9px;
  padding: 0 5px;
  border: 1px solid #aaa;
  text-align: left;
}
.doc-footer .upright {
  font-style: normal;
}
.c-name {
  width: 76px;
}
.c-title {
  width: 252px;
}
.c-key {
  width: 76px;
}
.scrollbar {
  width: 12px;
  display: flex;
  flex-direction: column;
  justify-content: space-between;
  border-right: 1px solid #d5d5d5;
}
.scrollbar button, .thumb {
  height: 11px;
  border: 1px solid #ababab;
  background: #fff;
}
.thumb {
  margin-top: 80px;
}

/* status bar */
.status {
  display: flex;
  align-items: center;
  height: 15px;
  flex-shrink: 0;
  padding: 0 5px;
  background: #f3f3f3;
  border-top: 1px solid #d5d5d5;
  font-size: 7px;
}
.st-page {
  width: 57px;
}
.st-words {
  width: 66px;
}
.st-proof {
  margin-right: 11px;
}
.views {
  display: flex;
  margin-left: auto;
}
.views button {
  width: 27px;
  height: 14px;
}
.views .on {
  background: #c6c6c6;
}
.zoom-step {
  width: 12px;
  color: #777;
}
.zoom {
  appearance: none;
  width: 66px;
  height: 8px;
  background: linear-gradient(#aaa, #aaa) no-repeat center / 100% 1px;
}
.zoom::-webkit-slider-thumb {
  appearance: none;
  width: 3px;
  height: 8px;
  background: #666;
}
.zoom-val {
  width: 23px;
  padding-left: 6px;
}

/* taskbar */
.taskbar {
  display: flex;
  height: 27px;
  flex-shrink: 0;
  background: linear-gradient(to right, #4a1f2b 0%, #4a1f2b 27%, #44332a 34%, #43302a 46%, #4a2623 58%, #3f2023 72%, #26383b 80%, #24393c 100%);
  color: #fff;
}
.start {
  width: 32px;
}
.search {
  display: flex;
  align-items: center;
  gap: 6px;
  width: 229px;
  padding-left: 8px;
  background: #f2f2f2;
  color: #333;
  font-size: 10px;
}
.search input::placeholder {
  color: #333;
}
.apps {
  display: flex;
}
.apps button {
  width: 33px;
  border-bottom: 2px solid transparent;
}
.apps .open {
  border-color: #76b9ed;
  margin: 0 3px;
  width: 27px;
}
.apps .current {
  width: 33px;
  margin: 0 1px;
  background: #6e5a56;
}
.word-w {
  font: bold 6px "Open Sans", sans-serif;
  fill: #fff;
  text-anchor: middle;
}
.tray {
  display: flex;
  align-items: center;
  margin-left: auto;
}
.help {
  margin-right: 23px;
}
.weather {
  gap: 7px;
  margin-right: 8px;
  font-size: 9px;
}
.tray-icons {
  display: flex;
}
.tray-icons button {
  width: 16px;
}
.tray-icons .lang {
  width: 24px;
}
.clock {
  flex-direction: column;
  width: 52px;
}
.notify {
  width: 33px;
  padding-right: 8px;
}
```
